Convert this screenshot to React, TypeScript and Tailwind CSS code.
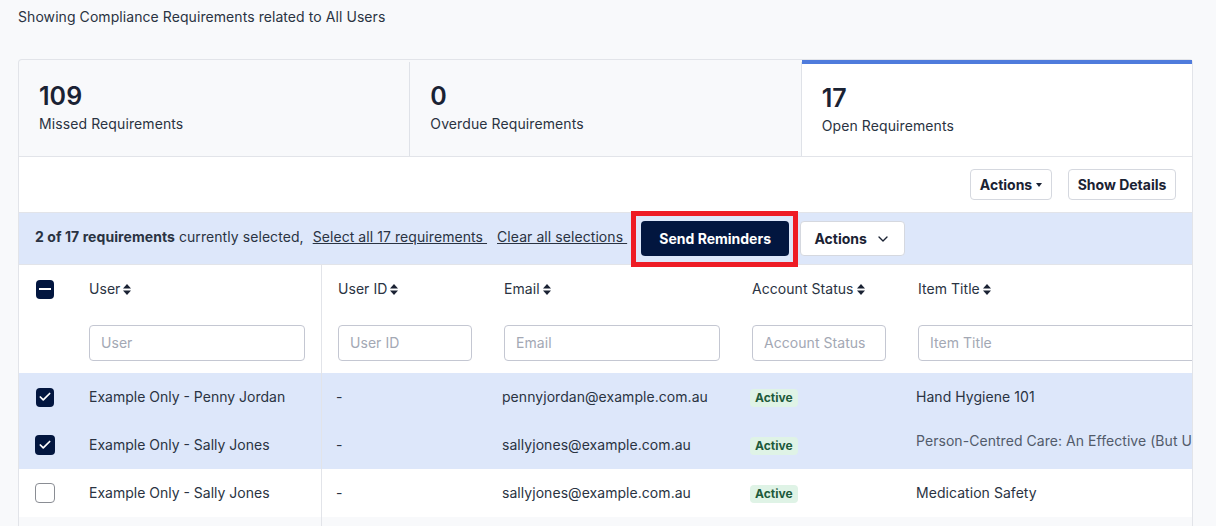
import { Check, ChevronDown } from "lucide-react";

const font = { fontFamily: "Inter, sans-serif" };

function SortIcon() {
  return (
    <svg width="8" height="11" viewBox="0 0 8 11" className="ml-[3px] shrink-0 fill-[#1a2233]">
      <path d="M4 0 L8 4.5 H0 Z" />
      <path d="M4 11 L0 6.5 H8 Z" />
    </svg>
  );
}

function Stat({ value, label, active }: { value: string; label: string; active?: boolean }) {
  return (
    <div
      className={`flex-1 pl-5 pt-[17px] ${
        active ? "bg-white border-t-4 border-[#4f7bdc]" : "mt-0.5 border-r border-[#dfe2e8]"
      }`}
    >
      <div className="text-[25px] leading-[34px] font-semibold text-[#1a2233]">{value}</div>
      <div className="text-sm leading-5 mt-px tracking-[0.1px] text-[#2a3342]">{label}</div>
    </div>
  );
}

function HeadCell({ label, width }: { label: string; width: string }) {
  return (
    <div className={`${width} shrink-0 pl-4 flex flex-col`}>
      <div className="h-12 flex items-center text-sm text-[#2a3342]">
        {label}
        <SortIcon />
      </div>
      <input
        placeholder={label}
        className="mt-3 h-9 w-full rounded border border-[#c4c7d2] bg-white px-[11px] pb-px text-sm placeholder:text-[#a3a8b4] outline-none"
      />
    </div>
  );
}

function Row({
  name,
  email,
  title,
  selected,
  muted,
  smallBox,
}: {
  name: string;
  email: string;
  title: string;
  selected?: boolean;
  muted?: boolean;
  smallBox?: boolean;
}) {
  return (
    <div className={`flex h-12 items-center text-sm text-[#2a3342] ${selected ? "bg-[#dde7fa]" : "bg-white"}`}>
      <div className="w-[303px] h-full shrink-0 flex items-center border-r border-[#e2e4e9] pl-4">
        <div className="w-5 flex justify-center">
          {selected ? (
            <span
              className={`rounded bg-[#02163f] flex items-center justify-center ${
                smallBox ? "w-[18px] h-[19px]" : "w-5 h-5"
              }`}
            >
              <Check size={14} strokeWidth={3} className="text-white" />
            </span>
          ) : (
            <span className="w-5 h-5 rounded border border-[#8a8d94] bg-white" />
          )}
        </div>
        <span className="ml-[34px] tracking-normal">{name}</span>
      </div>
      <div className="w-[166px] shrink-0 pl-[14px]">-</div>
      <div className="w-[248px] shrink-0 pl-[14px]">{email}</div>
      <div className="w-[166px] shrink-0 pl-[14px]">
        <span className="inline-block rounded bg-[#dff3e6] px-[5px] text-xs leading-[18px] font-bold text-[#1d5a3a]">
          Active
        </span>
      </div>
      <div className={`flex-1 pl-[14px] whitespace-nowrap overflow-hidden ${muted ? "text-[#525b6b] -mt-2" : ""}`}>
        {title}
      </div>
    </div>
  );
}

export default function App() {
  return (
    <div style={font} className="w-[1216px] h-[526px] overflow-hidden bg-[#f8f9fb] text-[#1a2233] tracking-[0.05px]">
      <div className="pl-[18px] pt-[8px] h-[59px] text-sm leading-[18px] tracking-[0.07px] text-[#2a3342]">
        Showing Compliance Requirements related to All Users
      </div>
      <div className="ml-[18px] w-[1175px] border border-[#e2e4e9] border-b-0 rounded-t-sm">
        <div className="flex h-[97px] border-b border-[#e2e4e9]">
          <Stat value="109" label="Missed Requirements" />
          <Stat value="0" label="Overdue Requirements" />
          <Stat value="17" label="Open Requirements" active />
        </div>
        <div className="h-[56px] bg-white flex items-center justify-end gap-4 pr-4 border-b border-[#e2e4e9]">
          <button className="h-[31px] w-[82px] rounded border border-[#d5d8df] bg-white flex items-center justify-center text-sm font-bold tracking-normal">
            Actions
            <span className="ml-1 border-x-[3.5px] border-x-transparent border-t-[4px] border-t-[#1a2233]" />
          </button>
          <button className="h-[31px] w-[108px] rounded border border-[#d5d8df] bg-white text-sm font-bold tracking-normal">
            Show Details
          </button>
        </div>
        <div className="h-[51px] bg-[#dde7fa] flex items-center pl-4 text-sm tracking-[0.07px] text-[#2a3342] whitespace-nowrap">
          <span className="mb-[3px]">
            <b className="font-bold">2 of 17 requirements</b> currently selected,
          </span>
          <span className="ml-[9px] mb-[3px] underline">Select all 17 requirements&nbsp;</span>
          <span className="ml-[10px] mb-[3px] underline">Clear all selections&nbsp;</span>
          <div className="ml-[4px] shrink-0 border-[5px] border-[#ee1c25] h-[56px] w-[167px] pl-[5px] pr-1 flex items-center">
            <button className="w-full h-[35px] rounded bg-[#02163f] text-white text-sm font-bold tracking-normal">
              Send Reminders
            </button>
          </div>
          <button className="h-[35px] w-[105px] ml-[2px] shrink-0 rounded bg-white border border-[#d5d8df] flex items-center justify-center text-sm font-bold tracking-normal text-[#1a2233]">
            Actions
            <ChevronDown size={16} className="ml-2" />
          </button>
        </div>
        <div className="flex h-[109px] bg-white border-t border-[#e2e4e9]">
          <div className="w-[303px] shrink-0 flex border-r border-[#e2e4e9] pl-4">
            <div className="w-5 h-12 flex items-center justify-center">
              <span className="w-[18px] h-[19px] rounded bg-[#02163f] flex items-center justify-center">
                <span className="w-3 h-0.5 bg-white" />
              </span>
            </div>
            <div className="ml-[34px] w-[216px] flex flex-col">
              <div className="h-12 flex items-center text-sm text-[#2a3342]">
                User
                <SortIcon />
              </div>
              <input
                placeholder="User"
                className="mt-3 h-9 w-full rounded border border-[#c4c7d2] bg-white px-[11px] pb-px text-sm placeholder:text-[#a3a8b4] outline-none"
              />
            </div>
          </div>
          <div className="flex flex-1 overflow-hidden">
            <HeadCell label="User ID" width="w-[150px]" />
            <div className="w-4 shrink-0" />
            <HeadCell label="Email" width="w-[232px]" />
            <div className="w-4 shrink-0" />
            <HeadCell label="Account Status" width="w-[150px]" />
            <div className="w-4 shrink-0" />
            <HeadCell label="Item Title" width="w-[300px]" />
          </div>
        </div>
        <Row
          name="Example Only - Penny Jordan"
          email="pennyjordan@example.com.au"
          title="Hand Hygiene 101"
          selected
          smallBox
        />
        <Row
          name="Example Only - Sally Jones"
          email="sallyjones@example.com.au"
          title="Person-Centred Care: An Effective (But Underused) Approach"
          selected
          muted
        />
        <Row name="Example Only - Sally Jones" email="sallyjones@example.com.au" title="Medication Safety" />
        <div className="h-[20px] flex">
          <div className="w-[303px] border-r border-[#e2e4e9]" />
        </div>
      </div>
    </div>
  );
}
